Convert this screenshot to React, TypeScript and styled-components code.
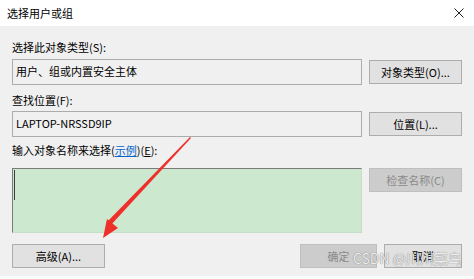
import styled, { createGlobalStyle } from "styled-components";

const GlobalStyle = createGlobalStyle`
  html, body {
    margin: 0;
    padding: 0;
    background: #ffffff;
  }
`;

const Window = styled.div`
  position: relative;
  width: 474px;
  height: 279px;
  display: flex;
  flex-direction: column;
  overflow: hidden;
  font-family: "Noto Sans CJK SC", "Noto Sans", sans-serif;
  font-size: 11px;
  color: #000;
`;

const TitleBar = styled.div`
  height: 26px;
  flex-shrink: 0;
  display: flex;
  align-items: center;
  justify-content: space-between;
  padding: 0 10px 0 7px;
  background: #ffffff;
`;

const Title = styled.span`
  font-size: 11px;
  line-height: 26px;
`;

const Close = styled.span`
  display: flex;
  width: 10px;
  height: 10px;
`;

const Body = styled.div`
  flex: 1;
  display: flex;
  flex-direction: column;
  padding: 0 12px;
  background: #f0f0f0;
  border-bottom: 3px solid #fbfbfb;
`;

const Label = styled.div<{ $top: number }>`
  height: 16px;
  line-height: 16px;
  margin-top: ${(p) => p.$top}px;
  white-space: nowrap;
`;

const Mnemonic = styled.span`
  text-decoration: underline;
`;

const Link = styled.span`
  color: #0066cc;
  text-decoration: underline;
`;

const Row = styled.div<{ $top: number; $align?: string }>`
  display: grid;
  grid-template-columns: 350px 93px;
  column-gap: 7px;
  align-items: ${(p) => p.$align ?? "center"};
  margin-top: ${(p) => p.$top}px;
`;

const Field = styled.div`
  height: 26px;
  box-sizing: border-box;
  border: 1px solid #acacac;
  background: #f0f0f0;
  padding: 0 3px;
  line-height: 22px;
  white-space: nowrap;
`;

const NameInput = styled.div`
  position: relative;
  height: 65px;
  box-sizing: border-box;
  border: 1px solid #7a7a7a;
  border-right-color: #c6dec9;
  border-bottom-color: #c6dec9;
  background: #cce8cf;
`;

const Caret = styled.span`
  position: absolute;
  left: 1px;
  top: 1px;
  width: 1px;
  height: 30px;
  background: #3c3c3c;
`;

const Button = styled.div<{ $w?: number; $disabled?: boolean }>`
  width: ${(p) => (p.$w ? `${p.$w}px` : "auto")};
  height: 24px;
  box-sizing: border-box;
  border: 1px solid ${(p) => (p.$disabled ? "#bfbfbf" : "#adadad")};
  background: ${(p) => (p.$disabled ? "#cccccc" : "#e1e1e1")};
  color: ${(p) => (p.$disabled ? "#8a8a8a" : "#000")};
  display: flex;
  align-items: center;
  justify-content: center;
  white-space: nowrap;
`;

const Footer = styled.div`
  display: flex;
  gap: 7px;
  margin-top: 11px;
`;

const Spacer = styled.div`
  flex: 1;
`;

const Arrow = styled.svg`
  position: absolute;
  left: 0;
  top: 0;
  pointer-events: none;
`;

const Watermark = styled.span`
  position: absolute;
  right: 12px;
  top: 249px;
  font-size: 14px;
  line-height: 18px;
  color: rgba(255, 255, 255, 0.85);
  text-shadow: 0 0 1px #8a8a8a, 0 0 1px #8a8a8a;
  white-space: nowrap;
`;

export default function App() {
  return (
    <Window>
      <GlobalStyle />
      <TitleBar>
        <Title>选择用户或组</Title>
        <Close>
          <svg width="10" height="10" viewBox="0 0 10 10">
            <path d="M0.5 0.5 L9.5 9.5 M9.5 0.5 L0.5 9.5" stroke="#222" strokeWidth="1" />
          </svg>
        </Close>
      </TitleBar>
      <Body>
        <Label $top={13}>选择此对象类型(S):</Label>
        <Row $top={4}>
          <Field>用户、组或内置安全主体</Field>
          <Button>对象类型(O)...</Button>
        </Row>
        <Label $top={7}>查找位置(F):</Label>
        <Row $top={3}>
          <Field>LAPTOP-NRSSD9IP</Field>
          <Button>位置(L)...</Button>
        </Row>
        <Label $top={5}>
          输入对象名称来选择(<Link>示例</Link>)(<Mnemonic>E</Mnemonic>):
        </Label>
        <Row $top={10} $align="start">
          <NameInput>
            <Caret />
          </NameInput>
          <Button $disabled>检查名称(C)</Button>
        </Row>
        <Footer>
          <Button $w={93}>高级(A)...</Button>
          <Spacer />
          <Button $w={77} $disabled>
            确定
          </Button>
          <Button $w={78}>取消</Button>
        </Footer>
      </Body>
      <Arrow width="474" height="279" viewBox="0 0 474 279">
        <polygon points="190,137 191,138 110,226 106,223" fill="#ee2f2a" />
        <polygon points="103,238 107,219 118,228" fill="#ee2f2a" />
      </Arrow>
      <Watermark>CSDN @川川菜鸟</Watermark>
    </Window>
  );
}
